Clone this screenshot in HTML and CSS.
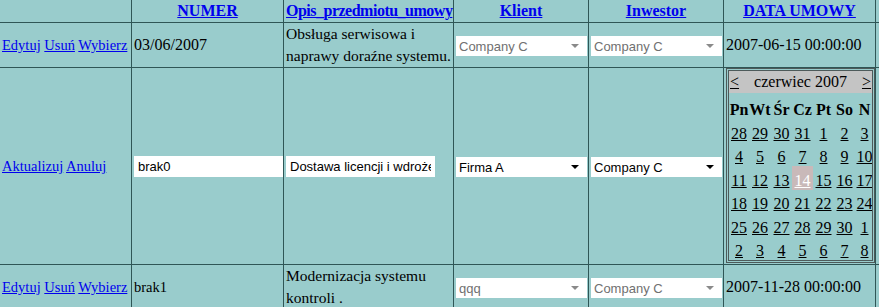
FILE: index.html
```html
<!DOCTYPE html>
<html lang="pl">
<head>
    <meta charset="UTF-8">
    <title>Umowy</title>
    <link rel="stylesheet" href="styles.css">
</head>
<body>
    <table class="grid">
        <colgroup>
            <col class="col-cmd">
            <col class="col-num">
            <col class="col-opis">
            <col class="col-pick">
            <col class="col-pick">
            <col class="col-date">
            <col class="col-rest">
        </colgroup>
        <tr class="head">
            <th></th>
            <th><a href="#">NUMER</a></th>
            <th><a href="#" class="opis-head">Opis_przedmiotu_umowy</a></th>
            <th><a href="#">Klient</a></th>
            <th><a href="#">Inwestor</a></th>
            <th><a href="#">DATA UMOWY</a></th>
            <th></th>
        </tr>
        <tr>
            <td class="cmd"><a href="#">Edytuj</a> <a href="#">Usuń</a> <a href="#">Wybierz</a></td>
            <td>03/06/2007</td>
            <td class="opis">Obsługa serwisowa i naprawy doraźne systemu.</td>
            <td><span class="pick off"><select disabled><option>Company C</option></select></span></td>
            <td><span class="pick off"><select disabled><option>Company C</option></select></span></td>
            <td class="nowrap">2007-06-15 00:00:00</td>
            <td></td>
        </tr>
        <tr>
            <td class="cmd"><a href="#">Aktualizuj</a> <a href="#">Anuluj</a></td>
            <td><input class="field" type="text" value="brak0"></td>
            <td><input class="field" type="text" value="Dostawa licencji i wdrożenie systemu"></td>
            <td><span class="pick"><select><option>Firma A</option></select></span></td>
            <td><span class="pick"><select><option>Company C</option></select></span></td>
            <td>
                <div class="cal">
                    <div class="cal-in">
                        <div class="cal-bar">
                            <a href="#">&lt;</a>
                            <span>czerwiec 2007</span>
                            <a href="#">&gt;</a>
                        </div>
                        <table class="cal-table">
                            <colgroup>
                                <col class="d-1">
                                <col class="d-2">
                                <col class="d-3">
                                <col class="d-4">
                                <col class="d-5">
                                <col class="d-6">
                                <col class="d-7">
                            </colgroup>
                            <tr class="cal-days">
                                <th>Pn</th><th>Wt</th><th>Śr</th><th>Cz</th><th>Pt</th><th>So</th><th>N</th>
                            </tr>
                            <tr>
                                <td><a href="#">28</a></td><td><a href="#">29</a></td><td><a href="#">30</a></td><td><a href="#">31</a></td><td><a href="#">1</a></td><td><a href="#">2</a></td><td><a href="#">3</a></td>
                            </tr>
                            <tr>
                                <td><a href="#">4</a></td><td><a href="#">5</a></td><td><a href="#">6</a></td><td><a href="#">7</a></td><td><a href="#">8</a></td><td><a href="#">9</a></td><td><a href="#">10</a></td>
                            </tr>
                            <tr>
                                <td><a href="#">11</a></td><td><a href="#">12</a></td><td><a href="#">13</a></td><td class="picked"><a href="#">14</a></td><td><a href="#">15</a></td><td><a href="#">16</a></td><td><a href="#">17</a></td>
                            </tr>
                            <tr>
                                <td><a href="#">18</a></td><td><a href="#">19</a></td><td><a href="#">20</a></td><td><a href="#">21</a></td><td><a href="#">22</a></td><td><a href="#">23</a></td><td><a href="#">24</a></td>
                            </tr>
                            <tr>
                                <td><a href="#">25</a></td><td><a href="#">26</a></td><td><a href="#">27</a></td><td><a href="#">28</a></td><td><a href="#">29</a></td><td><a href="#">30</a></td><td><a href="#">1</a></td>
                            </tr>
                            <tr>
                                <td><a href="#">2</a></td><td><a href="#">3</a></td><td><a href="#">4</a></td><td><a href="#">5</a></td><td><a href="#">6</a></td><td><a href="#">7</a></td><td><a href="#">8</a></td>
                            </tr>
                        </table>
                    </div>
                </div>
            </td>
            <td></td>
        </tr>
        <tr>
            <td class="cmd"><a href="#">Edytuj</a> <a href="#">Usuń</a> <a href="#">Wybierz</a></td>
            <td class="small">brak1</td>
            <td class="opis">Modernizacja systemu kontroli .</td>
            <td><span class="pick off"><select disabled><option>qqq</option></select></span></td>
            <td><span class="pick off"><select disabled><option>Company C</option></select></span></td>
            <td class="nowrap">2007-11-28 00:00:00</td>
            <td></td>
        </tr>
    </table>
</body>
</html>
```

FILE: styles.css
```css
:root {
    --bg-teal: #99cccc;
    --grid-line: #2f5656;
    --link-blue: #0000ee;
    --cal-line: #4d5a5a;
}

body {
    margin: 0;
    background-color: var(--bg-teal);
    font-family: "Liberation Serif", "Times New Roman", serif;
    font-size: 16px;
    color: #000;
}

a {
    color: var(--link-blue);
}

.grid {
    border-collapse: separate;
    border-spacing: 0;
    table-layout: fixed;
    width: 980px;
}

.col-cmd { width: 132px; }
.col-num { width: 152px; }
.col-opis { width: 170px; }
.col-pick { width: 135px; }
.col-date { width: 152px; }
.col-rest { width: 104px; }

.grid > tbody > tr > td,
.grid > tbody > tr > th {
    box-sizing: border-box;
    border-right: 1px solid var(--grid-line);
    border-bottom: 1px solid var(--grid-line);
    padding: 0 2px;
    line-height: 22px;
    vertical-align: middle;
    text-align: left;
    background-color: var(--bg-teal);
}

.grid .head th {
    text-align: center;
    font-weight: bold;
    white-space: nowrap;
}

.opis-head {
    letter-spacing: -0.5px;
}

.cmd {
    white-space: nowrap;
    font-size: 14.5px;
}

.small {
    font-size: 14.5px;
}

.opis {
    font-size: 15.5px;
}

.nowrap {
    white-space: nowrap;
}

.field {
    box-sizing: border-box;
    width: 149px;
    height: 21px;
    margin: 0;
    padding: 0 4px;
    border: none;
    background-color: #fff;
    font-family: "Liberation Sans", Arial, sans-serif;
    font-size: 13px;
    color: #000;
    vertical-align: middle;
}

.pick {
    position: relative;
    display: inline-block;
    vertical-align: middle;
}

.pick select {
    -webkit-appearance: none;
    appearance: none;
    display: block;
    box-sizing: border-box;
    width: 131px;
    height: 20px;
    margin: 0;
    padding: 0 0 0 3px;
    border: none;
    border-radius: 0;
    background-color: #fff;
    font-family: "Liberation Sans", Arial, sans-serif;
    font-size: 13px;
    color: #000;
    opacity: 1;
}

.pick.off select {
    color: #707070;
}

.pick::after {
    content: "";
    position: absolute;
    right: 8px;
    top: 50%;
    margin-top: -2px;
    border-left: 4px solid transparent;
    border-right: 4px solid transparent;
    border-top: 4px solid #000;
}

.pick.off::after {
    border-top-color: #8a8a8a;
}

.cal {
    box-sizing: border-box;
    width: 149px;
    height: 195px;
    margin: 0 0 1px;
    padding: 1px;
    border: 1px solid var(--cal-line);
}

.cal-in {
    box-sizing: border-box;
    height: 100%;
    border: 1px solid var(--cal-line);
    overflow: hidden;
    line-height: 18px;
}

.cal-bar {
    display: flex;
    justify-content: space-between;
    align-items: center;
    height: 22px;
    margin-bottom: 3px;
    padding: 0 1px;
    background-color: #c4c4c4;
}

.cal-bar a {
    color: #000;
}

.cal-table {
    width: 145px;
    table-layout: fixed;
    border-collapse: collapse;
    border-spacing: 0;
}

.d-1 { width: 20px; }
.d-2 { width: 22px; }
.d-3 { width: 21px; }
.d-4 { width: 21px; }
.d-5 { width: 21px; }
.d-6 { width: 21px; }
.d-7 { width: 19px; }

.cal-table td,
.cal-table th {
    height: 23.43px;
    padding: 0;
    text-align: center;
    vertical-align: bottom;
    white-space: nowrap;
    overflow: hidden;
}

.cal-table a {
    color: #000;
}

.cal-days th {
    font-weight: bold;
}

.cal-table td.picked {
    background-color: #c9b9b9;
}

.cal-table td.picked a {
    color: #fff;
}
```
